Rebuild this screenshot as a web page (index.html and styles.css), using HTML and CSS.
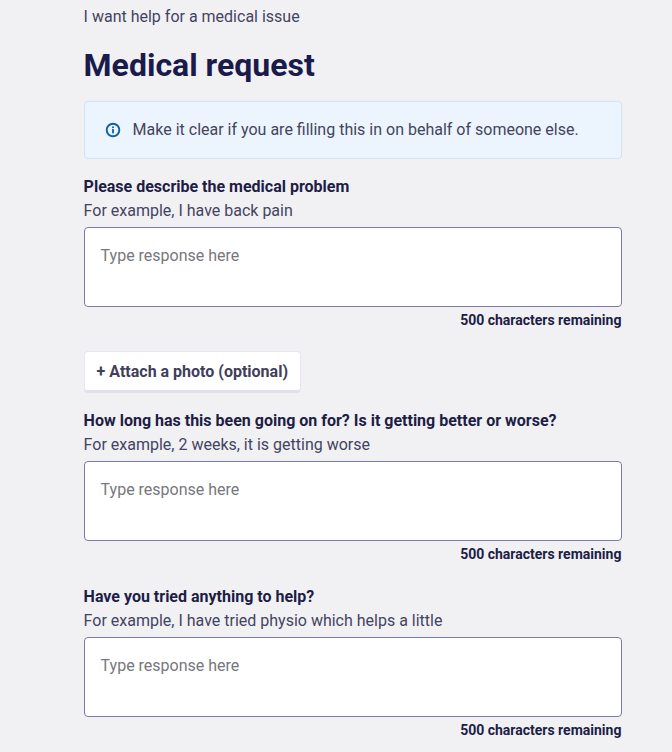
FILE: index.html
```html
<!DOCTYPE html>
<html lang="en">
<head>
  <meta charset="UTF-8">
  <title>Medical request</title>
  <link rel="stylesheet" href="styles.css">
</head>
<body>
  <main class="page">
    <p class="eyebrow">I want help for a medical issue</p>
    <h1>Medical request</h1>

    <div class="notice">
      <svg class="notice-icon" width="16" height="16" viewBox="0 0 16 16" fill="none">
        <circle cx="8" cy="8" r="6.3" stroke="#0f62a8" stroke-width="1.9"/>
        <rect x="7.1" y="7" width="1.8" height="4.4" fill="#0f62a8"/>
        <rect x="7.1" y="4.4" width="1.8" height="1.7" fill="#0f62a8"/>
      </svg>
      <span>Make it clear if you are filling this in on behalf of someone else.</span>
    </div>

    <section class="field">
      <label>Please describe the medical problem</label>
      <p class="hint">For example, I have back pain</p>
      <div class="input">Type response here</div>
      <p class="count">500 characters remaining</p>
    </section>

    <button class="attach">+ Attach a photo (optional)</button>

    <section class="field">
      <label>How long has this been going on for? Is it getting better or worse?</label>
      <p class="hint">For example, 2 weeks, it is getting worse</p>
      <div class="input">Type response here</div>
      <p class="count">500 characters remaining</p>
    </section>

    <section class="field field-next">
      <label>Have you tried anything to help?</label>
      <p class="hint">For example, I have tried physio which helps a little</p>
      <div class="input">Type response here</div>
      <p class="count">500 characters remaining</p>
    </section>
  </main>
</body>
</html>
```

FILE: styles.css
```css
* {
  margin: 0;
  padding: 0;
  box-sizing: border-box;
}

html, body {
  height: 752px;
  overflow: hidden;
}

body {
  font-family: Roboto, sans-serif;
  background-color: #f1f1f4;
  color: #44445f;
  font-size: 16px;
  line-height: 24px;
}

.page {
  width: 538.4px;
  margin-left: 83.6px;
  padding-top: 5px;
}

.eyebrow {
  margin-bottom: 16px;
}

h1 {
  font-size: 32px;
  line-height: 40px;
  font-weight: 700;
  color: #1a1b4b;
  margin-bottom: 16px;
}

/* Notice */
.notice {
  display: flex;
  align-items: center;
  gap: 12px;
  height: 58px;
  padding: 0 20px;
  background-color: #ecf5fd;
  border: 1px solid #cfe4f8;
  border-radius: 4px;
  margin-bottom: 16px;
}

.notice-icon {
  flex-shrink: 0;
}

/* Fields */
.field label {
  display: block;
  font-weight: 700;
  color: #1d1d45;
}

.hint {
  margin-bottom: 4px;
}

.input {
  height: 80px;
  padding: 16px;
  background-color: #fff;
  border: 1px solid #7a7aa8;
  border-radius: 4px;
  color: #77777c;
}

.count {
  font-size: 14px;
  font-weight: 700;
  line-height: 20px;
  color: #1d1d45;
  text-align: right;
  margin-top: 3px;
  padding-right: 0.6px;
}

.field-next {
  margin-top: 21px;
}

.attach {
  display: block;
  margin: 21px 0 16px;
  height: 42px;
  padding: 0 12px;
  font-family: inherit;
  font-size: 16px;
  font-weight: 700;
  color: #3f3f5c;
  background-color: #fff;
  border: 1px solid #e6e6f0;
  border-bottom: 3px solid #e1e1ec;
  border-radius: 4px;
}
```
